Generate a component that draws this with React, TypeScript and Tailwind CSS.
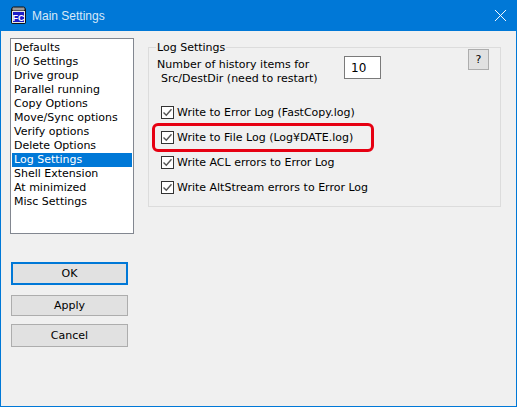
import { X } from 'lucide-react';

const font = { fontFamily: '"DejaVu Sans", sans-serif' };

const items = [
  'Defaults',
  'I/O Settings',
  'Drive group',
  'Parallel running',
  'Copy Options',
  'Move/Sync options',
  'Verify options',
  'Delete Options',
  'Log Settings',
  'Shell Extension',
  'At minimized',
  'Misc Settings',
];

function FcIcon() {
  return (
    <svg width="19" height="19" viewBox="0 0 19 19">
      <rect x="2" y="2" width="15" height="16" rx="2" fill="#111" />
      <rect x="3" y="1" width="13" height="4" rx="1.5" fill="#9a9a9a" stroke="#111" strokeWidth="1" />
      <rect x="3.5" y="5.5" width="12" height="11" fill="#1c1cc8" stroke="#e8e8e8" strokeWidth="1" />
      <text x="9.5" y="14.5" textAnchor="middle" fontSize="9" fontWeight="700" fill="#fff" fontFamily="Liberation Sans, sans-serif">FC</text>
    </svg>
  );
}

function CheckMark() {
  return (
    <svg width="11" height="11" viewBox="0 0 11 11" fill="none">
      <path d="M1.5 5.5 L4.3 8.3 L9.5 2.2" stroke="#555" strokeWidth="1.4" />
    </svg>
  );
}

function CheckRow({ label, boxed }: { label: string; boxed?: boolean }) {
  return (
    <div className={boxed ? 'flex items-center h-[29px] -ml-[9px] pl-[6px] w-[222px] border-[3px] border-[#e60012] rounded-[6px] -my-[2px]' : 'flex items-center h-[25px]'}>
      <span className="w-[13px] h-[13px] border border-[#333] bg-white flex items-center justify-center shrink-0">
        <CheckMark />
      </span>
      <span className="ml-[3px] whitespace-nowrap">{label}</span>
    </div>
  );
}

export default function App() {
  return (
    <div className="w-[517px] h-[407px] bg-[#f0f0f0] border border-[#0078d7] border-t-0 flex flex-col text-[11px] leading-[14px] text-black overflow-hidden" style={font}>
      {/* Title bar */}
      <div className="h-[31px] bg-[#0078d7] flex items-center pl-[8px] shrink-0">
        <FcIcon />
        <span className="ml-[4px] text-[#d9e9f8] text-[12px] font-['Liberation_Sans',sans-serif]">Main Settings</span>
        <X size={21} strokeWidth={1.1} className="ml-auto mr-[5px] text-white" />
      </div>

      <div className="flex flex-1">
        {/* Left column */}
        <div className="w-[147px] pl-[9px] pt-[7px] shrink-0">
          <div className="w-[124px] h-[196px] bg-white border border-[#828790] p-px pt-[2px]">
            {items.map((it) => (
              <div key={it} className={it === 'Log Settings' ? 'h-[14px] pl-[2px] bg-[#0078d7] text-white' : 'h-[14px] pl-[2px]'}>
                {it}
              </div>
            ))}
          </div>
          <div className="mt-[28px] w-[117px] ml-px">
            <button className="w-full h-[23px] bg-[#e1e1e1] border-2 border-[#0078d7]">OK</button>
            <button className="w-full h-[21px] mt-[10px] bg-[#e1e1e1] border border-[#adadad]">Apply</button>
            <button className="w-full h-[23px] mt-[8px] bg-[#e1e1e1] border border-[#adadad]">Cancel</button>
          </div>
        </div>

        {/* Log settings group */}
        <div className="relative w-[353px] h-[160px] mt-[16px] border border-[#dcdcdc] pl-[12px] pt-[8px]">
          <span className="absolute -top-[7px] left-[7px] px-px bg-[#f0f0f0]">Log Settings</span>
          <div className="flex -ml-[4px]">
            <div className="w-[187px] pt-[2px]">
              <div className="whitespace-nowrap">Number of history items for</div>
              <div className="whitespace-nowrap pl-[4px]">Src/DestDir (need to restart)</div>
            </div>
            <div className="w-[37px] h-[23px] border border-[#7a7a7a] bg-white flex items-center pl-[6px] text-[12px]">10</div>
            <button className="ml-[87px] -mt-[7px] w-[21px] h-[21px] bg-[#e1e1e1] border border-[#adadad]">?</button>
          </div>
          <div className="mt-[14px] flex flex-col">
            <CheckRow label="Write to Error Log (FastCopy.log)" />
            <CheckRow label="Write to File Log (Log¥DATE.log)" boxed />
            <CheckRow label="Write ACL errors to Error Log" />
            <CheckRow label="Write AltStream errors to Error Log" />
          </div>
        </div>
      </div>
    </div>
  );
}
